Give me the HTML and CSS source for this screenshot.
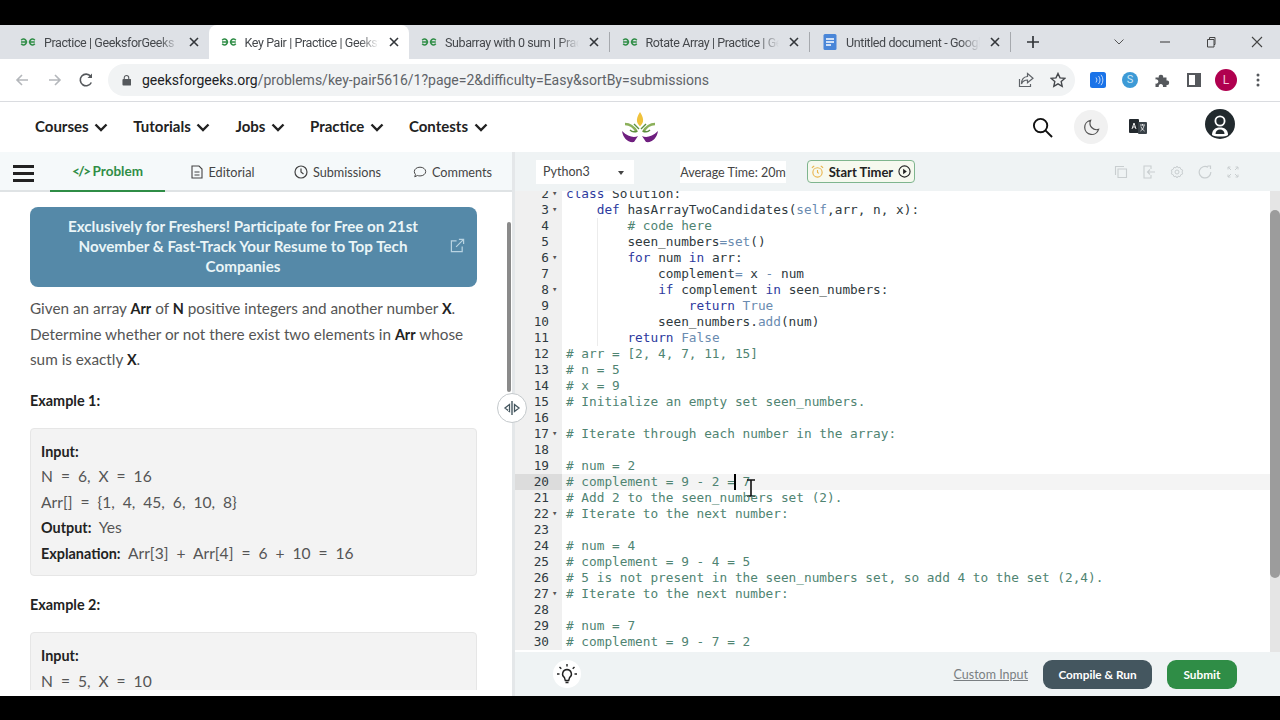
FILE: index.html
```html
<!DOCTYPE html>
<html>
<head>
<title>Key Pair | Practice | GeeksforGeeks</title>
<link rel="stylesheet" href="styles.css">
</head>

<body>

<svg class="defs" width="0" height="0">
<symbol id="gfg" viewBox="0 0 16 10">
<path d="M1 5h6.2M1.2 3.2A2.9 2.9 0 1 1 1.2 6.8M14.8 5H8.8M14.8 3.2A2.9 2.9 0 1 0 14.8 6.8" fill="none" stroke="#2f8d46" stroke-width="1.5"/>
</symbol>
<symbol id="close" viewBox="0 0 10 10">
<path d="M1 1l8 8M9 1l-8 8" stroke="#33363a" stroke-width="1.6"/>
</symbol>
<symbol id="chev" viewBox="0 0 14 9">
<path d="M1.5 1.5L7 7l5.5-5.5" fill="none" stroke="#222" stroke-width="2.4"/>
</symbol>
</svg>

<div class="blackBar topBar"></div>

<div class="tabStrip">
<div class="tab">
<svg class="favicon"><use href="#gfg"/></svg>
<span class="tabTitle">Practice | GeeksforGeeks</span>
<svg class="tabClose"><use href="#close"/></svg>
</div>
<div class="tab active">
<svg class="favicon"><use href="#gfg"/></svg>
<span class="tabTitle">Key Pair | Practice | GeeksforGeeks</span>
<svg class="tabClose"><use href="#close"/></svg>
</div>
<div class="tab sep">
<svg class="favicon"><use href="#gfg"/></svg>
<span class="tabTitle">Subarray with 0 sum | Practice</span>
<svg class="tabClose"><use href="#close"/></svg>
</div>
<div class="tab sep">
<svg class="favicon"><use href="#gfg"/></svg>
<span class="tabTitle">Rotate Array | Practice | GeeksforGeeks</span>
<svg class="tabClose"><use href="#close"/></svg>
</div>
<div class="tab sep">
<svg class="favicon" viewBox="0 0 16 16"><rect x="1.5" width="13" height="16" rx="1.5" fill="#4a86d8"/><path d="M4 5h8M4 8h8M4 11h5" stroke="#fff" stroke-width="1.3"/></svg>
<span class="tabTitle">Untitled document - Google Docs</span>
<svg class="tabClose"><use href="#close"/></svg>
</div>
<svg class="newTab" viewBox="0 0 14 14"><path d="M7 1v12M1 7h12" stroke="#33363a" stroke-width="1.7"/></svg>
<div class="winControls">
<svg class="winIcon" viewBox="0 0 12 12"><path d="M1.5 3.5L6 8l4.5-4.5" fill="none" stroke="#555" stroke-width="1"/></svg>
<svg class="winIcon" viewBox="0 0 12 12"><path d="M1 6h10" stroke="#444" stroke-width="1.1"/></svg>
<svg class="winIcon" viewBox="0 0 12 12"><path d="M2.5 3.5h6.5v7.5h-6.500zM4.500 3.500v-2h5.500v7h-1" fill="none" stroke="#444" stroke-width="1"/></svg>
<svg class="winIcon" viewBox="0 0 12 12"><path d="M1 1l10 10M11 1L1 11" stroke="#444" stroke-width="1.1"/></svg>
</div>
</div>

<div class="toolBar">
<svg class="navIcon back" viewBox="0 0 16 16"><path d="M14 8H3M8 3L3 8l5 5" fill="none" stroke="#b4b7bb" stroke-width="1.6"/></svg>
<svg class="navIcon" viewBox="0 0 16 16"><path d="M2 8h11M8 3l5 5-5 5" fill="none" stroke="#b4b7bb" stroke-width="1.6"/></svg>
<svg class="navIcon reload" viewBox="0 0 16 16"><path d="M13.300 10.500A5.800 5.800 0 1 1 12.600 4.300" fill="none" stroke="#55585c" stroke-width="1.600"/><path d="M14 1.500v4.500H9.500z" fill="#55585c"/></svg>
<div class="omnibox">
<svg class="lock" viewBox="0 0 10 12"><path d="M2.500 5V3.500a2.500 2.500 0 0 1 5 0V5" fill="none" stroke="#55585c" stroke-width="1.200"/><rect y="5" width="10" height="7" rx="1" x="0.500" fill="#55585c"/></svg>
<span class="url">geeksforgeeks.org<span class="urlPath">/problems/key-pair5616/1?page=2&amp;difficulty=Easy&amp;sortBy=submissions</span></span>
<svg class="omniIcon" viewBox="0 0 16 16"><path d="M9.500 1.500L15 6.200l-5.500 4.600V8C6 8 4.500 9.500 3.500 12c0-4.500 2-7.200 6-7.500zM1.500 7v7.500h11V12" fill="none" stroke="#5f6368" stroke-width="1.200"/></svg>
<svg class="omniIcon star" viewBox="0 0 16 16"><path d="M8 1.500l2 4.400 4.800.5-3.600 3.200 1 4.700L8 11.900l-4.200 2.400 1-4.700L1.200 6.400 6 5.900z" fill="none" stroke="#44474b" stroke-width="1.400"/></svg>
</div>
<div class="extensions">
<svg class="extIcon" viewBox="0 0 16 16"><rect width="16" height="16" rx="2.500" fill="#1a73e8"/><path d="M6 5.500a4 4 0 0 1 0 5M8.500 4a6 6 0 0 1 0 8M11 2.800a8 8 0 0 1 0 10.400" fill="none" stroke="#bcd6fa" stroke-width="1"/></svg>
<div class="extS">S</div>
<svg class="extIcon" viewBox="0 0 16 16"><path d="M1.500 5.500h3.300a2.200 2.200 0 1 1 4.300 0h3.400v3.100a2.200 2.200 0 1 1 0 4.300v2.100h-3.600a2.200 2.200 0 1 0-4.100 0H1.500v-3.400a2.200 2.200 0 1 0 0-4.200z" fill="#55585c"/></svg>
<svg class="extIcon" viewBox="0 0 16 16"><path d="M2 2h12v12H2z" fill="none" stroke="#55585c" stroke-width="2"/><rect x="9" y="2" width="5" height="12" fill="#55585c"/></svg>
<div class="profile">L</div>
<svg class="extIcon" viewBox="0 0 16 16"><circle cx="8" cy="3" r="1.500" fill="#55585c"/><circle cx="8" cy="8" r="1.500" fill="#55585c"/><circle cx="8" cy="13" r="1.500" fill="#55585c"/></svg>
</div>
</div>

<div class="siteNav">
<ul class="navMenu">
<li class="navItem">Courses <svg class="chev"><use href="#chev"/></svg></li>
<li class="navItem">Tutorials <svg class="chev"><use href="#chev"/></svg></li>
<li class="navItem">Jobs <svg class="chev"><use href="#chev"/></svg></li>
<li class="navItem">Practice <svg class="chev"><use href="#chev"/></svg></li>
<li class="navItem">Contests <svg class="chev"><use href="#chev"/></svg></li>
</ul>
<svg class="logo" viewBox="0 0 40 32">
<path d="M20 1c2.500 4 3.500 7 3 9.500-.5 2-1.800 3.500-3 5-1.200-1.500-2.500-3-3-5-.5-2.500.5-5.500 3-9.500z" fill="#f0c23c"/>
<path d="M2 20c1 7 6 12 12 11l4-6c-4 2-10 1-16-5zM38 20c-1 7-6 12-12 11l-4-6c4 2 10 1 16-5z" fill="#6f1f7f"/>
<path d="M5 13c5 0 9 3 12 8M35 13c-5 0-9 3-12 8" fill="none" stroke="#8bb05a" stroke-width="2.400"/>
<path d="M10 19c2 2 5 2 7 1M30 19c-2 2-5 2-7 1M14 13l5 5M26 13l-5 5" fill="none" stroke="#5d8f3f" stroke-width="1.400"/>
</svg>
<div class="siteIcons">
<svg class="searchIcon" viewBox="0 0 22 22"><circle cx="9" cy="9" r="7" fill="none" stroke="#111" stroke-width="2"/><path d="M14 14l7 7" stroke="#111" stroke-width="2"/></svg>
<div class="moonBtn"><svg class="moonIcon" viewBox="0 0 18 18"><path d="M8 1.500A7.500 7.500 0 1 0 16.500 11 7 7 0 0 1 8 1.500z" fill="none" stroke="#555" stroke-width="1.300"/></svg></div>
<svg class="langIcon" viewBox="0 0 18 16"><rect width="10" height="14" rx="1" fill="#23292e"/><rect x="9" y="3" width="9" height="12" rx="1" fill="#3a4248"/><path d="M3 10l2-6 2 6M3.800 8h2.400" fill="none" stroke="#fff" stroke-width=".9"/><path d="M11 6h5M13.500 5v1.500M15 6.500c-.5 3-2 4.500-3.500 5.500M12 7.500c.5 2 2 3.500 3.500 4.500" fill="none" stroke="#fff" stroke-width=".8"/></svg>
<svg class="userIcon" viewBox="0 0 30 30"><circle cx="15" cy="15" r="15" fill="#222a2e"/><circle cx="15" cy="12" r="4.600" fill="none" stroke="#fff" stroke-width="1.800"/><path d="M7 26c0-5 3-7.500 8-7.500s8 2.500 8 7.500c-2 2-13 2-16 0z" fill="#fff"/><path d="M10.500 25c0-3 2-4.500 4.500-4.500s4.500 1.500 4.500 4.500z" fill="#222a2e"/></svg>
</div>
</div>

<div class="workspace">

<div class="leftPane">
<div class="paneTabs">
<div class="hamburger"><i></i><i></i><i></i></div>
<div class="paneTab current"><b class="codeMark">&lt;/&gt;</b> Problem</div>
<div class="paneTab">
<svg class="tabIcon" viewBox="0 0 12 14"><path d="M1 1h7l3 3v9H1zM3.500 7h5M3.500 10h5" fill="none" stroke="#444" stroke-width="1.100"/></svg>
Editorial</div>
<div class="paneTab">
<svg class="tabIcon wide" viewBox="0 0 14 14"><circle cx="7" cy="7" r="6" fill="none" stroke="#444" stroke-width="1.200"/><path d="M7 3.500V7l2.500 2" fill="none" stroke="#444" stroke-width="1.200"/></svg>
Submissions</div>
<div class="paneTab">
<svg class="tabIcon wide" viewBox="0 0 16 14"><path d="M8 1.500c3.800 0 6.500 2.300 6.500 5s-2.700 5-6.500 5c-1 0-2-.2-3-.5L2 12.500l.8-2.800C2 8.800 1.500 7.700 1.500 6.500c0-2.700 2.700-5 6.500-5z" fill="none" stroke="#444" stroke-width="1.100"/></svg>
Comments</div>
</div>

<div class="paneBody">
<div class="problem">
<div class="banner">
<div class="bannerText">Exclusively for Freshers! Participate for Free on 21st November &amp; Fast-Track Your Resume to Top Tech Companies</div>
<svg class="bannerIcon" viewBox="0 0 16 16"><path d="M7 3H1.500v11.500H13V9M6.500 9.500L14.500 1.500M9.500 1.500h5v5" fill="none" stroke="#b9d4e2" stroke-width="1.300"/></svg>
</div>
<p class="statement">Given an array <b>Arr</b> of <b>N</b> positive integers and another number <b>X</b>. Determine whether or not there exist two elements in <b>Arr</b> whose sum is exactly <b>X</b>.</p>
<div class="exampleTitle">Example 1:</div>
<div class="exampleBox">
<div><b>Input:</b></div>
<div>N&nbsp; =&nbsp; 6,&nbsp; X&nbsp; =&nbsp; 16</div>
<div>Arr[]&nbsp; =&nbsp; {1,&nbsp; 4,&nbsp; 45,&nbsp; 6,&nbsp; 10,&nbsp; 8}</div>
<div><b>Output:</b>&nbsp; Yes</div>
<div><b>Explanation:</b>&nbsp; Arr[3]&nbsp; +&nbsp; Arr[4]&nbsp; =&nbsp; 6&nbsp; +&nbsp; 10&nbsp; =&nbsp; 16</div>
</div>
<div class="exampleTitle">Example 2:</div>
<div class="exampleBox">
<div><b>Input:</b></div>
<div>N&nbsp; =&nbsp; 5,&nbsp; X&nbsp; =&nbsp; 10</div>
</div>
</div>
<div class="paneThumb"></div>
</div>
</div>

<div class="rightPane">
<div class="editorBar">
<div class="langSelect">Python3 <span class="caret"></span></div>
<div class="avgTime">Average Time: 20m</div>
<div class="timerBtn">
<svg class="alarm" viewBox="0 0 14 14"><circle cx="7" cy="8" r="5" fill="none" stroke="#e9b44c" stroke-width="1.200"/><path d="M7 5.500V8l1.500 1M1 3l2.500-2M13 3l-2.500-2" fill="none" stroke="#e9b44c" stroke-width="1.200"/></svg>
Start Timer
<svg class="playIcon" viewBox="0 0 14 14"><circle cx="7" cy="7" r="6" fill="none" stroke="#222" stroke-width="1.200"/><path d="M5.500 4l4 3-4 3z" fill="#222"/></svg>
</div>
<div class="editorTools">
<svg class="toolIcon" viewBox="0 0 14 14"><path d="M1.500 10V1.500H10M4 4h8.500v8.500H4z" fill="none" stroke="#c9ced0" stroke-width="1.100"/></svg>
<svg class="toolIcon" viewBox="0 0 14 14"><path d="M9 4V1H2v12h7v-3M13 7H6M8 4.500L5.500 7 8 9.500" fill="none" stroke="#c9ced0" stroke-width="1.100"/></svg>
<svg class="toolIcon" viewBox="0 0 14 14"><circle cx="7" cy="7" r="2" fill="none" stroke="#c9ced0"/><path d="M7 1l1 1.800 2-.5.800 2 1.900.8-.6 1.900.6 1.900-1.900.8-.8 2-2-.5-1 1.800-1-1.800-2 .5-.8-2-1.900-.8.6-1.900-.6-1.900 1.900-.8.800-2 2 .5z" fill="none" stroke="#c9ced0"/></svg>
<svg class="toolIcon" viewBox="0 0 14 14"><path d="M10 2.200A5.800 5.800 0 1 0 12.800 7M9.500 1h3v3" fill="none" stroke="#c9ced0" stroke-width="1.200"/></svg>
<svg class="toolIcon" viewBox="0 0 14 14"><path d="M2 2l3 3M12 2L9 5M2 12l3-3M12 12L9 9M2 4.500V2h2.500M12 4.500V2H9.500M2 9.500V12h2.500M12 9.500V12H9.500" fill="none" stroke="#c9ced0"/></svg>
</div>
</div>

<div class="editorWrap">
<div class="editor">
<div class="codeLines">
<div class="line"><span class="gutter">2<em>▾</em></span><code><span class="kw">class</span> Solution:</code></div>
<div class="line"><span class="gutter">3<em>▾</em></span><code>    <span class="kw">def</span> hasArrayTwoCandidates(<span class="bi">self</span>,arr, n, x):</code></div>
<div class="line guide"><span class="gutter">4</span><code>        <span class="cm"># code here</span></code></div>
<div class="line guide"><span class="gutter">5</span><code>        seen_numbers<span class="bi">=set</span>()</code></div>
<div class="line guide"><span class="gutter">6<em>▾</em></span><code>        <span class="kw">for</span> num <span class="kw">in</span> arr:</code></div>
<div class="line guide"><span class="gutter">7</span><code>            complement<span class="bi">=</span> x <span class="bi">-</span> num</code></div>
<div class="line guide"><span class="gutter">8<em>▾</em></span><code>            <span class="kw">if</span> complement <span class="kw">in</span> seen_numbers:</code></div>
<div class="line guide"><span class="gutter">9</span><code>                <span class="kw">return</span> <span class="bi">True</span></code></div>
<div class="line guide"><span class="gutter">10</span><code>            seen_numbers.<span class="bi">add</span>(num)</code></div>
<div class="line guide"><span class="gutter">11</span><code>        <span class="kw">return</span> <span class="bi">False</span></code></div>
<div class="line"><span class="gutter">12</span><code class="cm"># arr = [2, 4, 7, 11, 15]</code></div>
<div class="line"><span class="gutter">13</span><code class="cm"># n = 5</code></div>
<div class="line"><span class="gutter">14</span><code class="cm"># x = 9</code></div>
<div class="line"><span class="gutter">15</span><code class="cm"># Initialize an empty set seen_numbers.</code></div>
<div class="line"><span class="gutter">16</span><code></code></div>
<div class="line"><span class="gutter">17<em>▾</em></span><code class="cm"># Iterate through each number in the array:</code></div>
<div class="line"><span class="gutter">18</span><code></code></div>
<div class="line"><span class="gutter">19</span><code class="cm"># num = 2</code></div>
<div class="line activeLine"><span class="gutter">20</span><code class="cm"># complement = 9 - 2 =<span class="textCursor"></span> 7<svg class="iBeam" viewBox="0 0 10 18"><path d="M1 1h8M1 17h8M5 1v16" fill="none" stroke="#111" stroke-width="1.600"/></svg></code></div>
<div class="line"><span class="gutter">21</span><code class="cm"># Add 2 to the seen_numbers set (2).</code></div>
<div class="line"><span class="gutter">22<em>▾</em></span><code class="cm"># Iterate to the next number:</code></div>
<div class="line"><span class="gutter">23</span><code></code></div>
<div class="line"><span class="gutter">24</span><code class="cm"># num = 4</code></div>
<div class="line"><span class="gutter">25</span><code class="cm"># complement = 9 - 4 = 5</code></div>
<div class="line"><span class="gutter">26</span><code class="cm"># 5 is not present in the seen_numbers set, so add 4 to the set (2,4).</code></div>
<div class="line"><span class="gutter">27<em>▾</em></span><code class="cm"># Iterate to the next number:</code></div>
<div class="line"><span class="gutter">28</span><code></code></div>
<div class="line"><span class="gutter">29</span><code class="cm"># num = 7</code></div>
<div class="line"><span class="gutter">30</span><code class="cm"># complement = 9 - 7 = 2</code></div>
</div>
</div>
<div class="editorScroll"><div class="editorThumb"></div></div>
</div>

<div class="editorFoot">
<div class="hintBtn"><svg class="bulb" viewBox="0 0 22 22"><path d="M11 6.500a4.500 4.500 0 0 0-2.500 8.200l.800 2.800h3.400l.8-2.800A4.500 4.500 0 0 0 11 6.500zM9.500 19.500h3M11 1v2.500M3.500 4l1.800 1.800M18.500 4l-1.800 1.800M1 11h2.500M18.500 11H21" fill="none" stroke="#222" stroke-width="1.400"/></svg></div>
<div class="customInput">Custom Input</div>
<div class="btn compile">Compile &amp; Run</div>
<div class="btn submit">Submit</div>
</div>
</div>

<div class="splitHandle"><svg viewBox="0 0 18 14"><path d="M6.500 3.500L2 7l4.500 3.500zM11.500 3.500L16 7l-4.500 3.500z" fill="none" stroke="#44565f" stroke-width="1.300"/><path d="M9 0v14" stroke="#44565f" stroke-width="1.400"/></svg></div>
</div>

<div class="blackBar bottomBar"></div>

</body>
</html>
```

FILE: styles.css
```css
html, body {
    margin: 0;
    height: 720px;
    overflow: hidden;
    background: #000;
    font-family: Lato, "Open Sans", sans-serif;
}
.defs {
    position: absolute;
}
.blackBar {
    background: #000;
}
.topBar {
    height: 25px;
}
.bottomBar {
    height: 24px;
}

/* browser tabs */
.tabStrip {
    height: 34px;
    background: #dee1e6;
    display: flex;
    align-items: center;
    padding-left: 8px;
}
.tab {
    width: 200.5px;
    height: 34px;
    box-sizing: border-box;
    display: flex;
    align-items: center;
    padding: 0 10px 0 12px;
    font: 12.5px Roboto, sans-serif;
    letter-spacing: -0.4px;
    color: #45484c;
}
.tab.active {
    background: #fff;
    border-radius: 8px 8px 0 0;
}
.tab.sep {
    border-right: 1px solid #a6a9ae;
    height: 20px;
}
.favicon {
    width: 16px;
    height: 16px;
    flex: none;
    margin-right: 8px;
}
.tabTitle {
    flex: 1;
    overflow: hidden;
    white-space: nowrap;
    -webkit-mask-image: linear-gradient(to right, #000 85%, transparent);
    mask-image: linear-gradient(to right, #000 85%, transparent);
}
.tabClose {
    width: 10px;
    height: 10px;
    flex: none;
    margin-left: 10px;
}
.newTab {
    width: 14px;
    height: 14px;
    margin-left: 15px;
}
.winControls {
    margin-left: auto;
    display: flex;
    align-items: center;
    gap: 34px;
    padding-right: 17px;
}
.winIcon {
    width: 12px;
    height: 12px;
}

/* address bar */
.toolBar {
    height: 42px;
    background: #fff;
    border-bottom: 1px solid #dadce0;
    display: flex;
    align-items: center;
    padding-left: 14px;
}
.navIcon {
    width: 16px;
    height: 16px;
    margin-right: 15px;
}
.navIcon.back {
    margin-right: 17px;
}
.navIcon.reload {
    margin-right: 14px;
}
.omnibox {
    width: 967px;
    height: 32px;
    border-radius: 16px;
    background: #f1f3f4;
    display: flex;
    align-items: center;
    box-sizing: border-box;
    padding-left: 14px;
}
.lock {
    width: 9px;
    height: 12px;
    margin-right: 11px;
}
.url {
    font: 14px Roboto, sans-serif;
    color: #202124;
    flex: 1;
    white-space: nowrap;
}
.urlPath {
    color: #5f6368;
}
.omniIcon {
    width: 16px;
    height: 16px;
    margin-right: 16px;
}
.omniIcon.star {
    margin-right: 9px;
}
.extensions {
    display: flex;
    align-items: center;
    margin-left: 15px;
    gap: 16px;
}
.extIcon {
    width: 16px;
    height: 16px;
}
.extS {
    width: 16px;
    height: 16px;
    border-radius: 50%;
    background: #3d9ad6;
    color: #cfe8f7;
    font: 11px/16px Roboto, sans-serif;
    text-align: center;
}
.profile {
    width: 22px;
    height: 22px;
    margin: 0 -3px;
    border-radius: 50%;
    background: #b0004f;
    color: #f6c9dc;
    font: 12px/22px Roboto, sans-serif;
    text-align: center;
}

/* site navigation */
.siteNav {
    height: 50px;
    background: #fff;
    display: flex;
    align-items: center;
}
.navMenu {
    list-style: none;
    display: flex;
    margin: 0;
    padding: 0 0 2px 35px;
    gap: 25px;
    width: 584px;
    box-sizing: border-box;
}
.navItem {
    font: bold 15px Lato, sans-serif;
    color: #222;
    white-space: nowrap;
}
.chev {
    width: 14px;
    height: 9px;
    margin-left: 2px;
}
.logo {
    width: 40px;
    height: 32px;
    margin-left: 36px;
}
.siteIcons {
    margin-left: auto;
    display: flex;
    align-items: center;
    padding-right: 45px;
}
.searchIcon {
    width: 21px;
    height: 21px;
    margin-top: 1px;
}
.moonBtn {
    width: 34px;
    height: 34px;
    margin-left: 21px;
    border-radius: 50%;
    background: #f1f1f1;
    display: flex;
    align-items: center;
    justify-content: center;
}
.moonIcon {
    width: 17px;
    height: 17px;
}
.langIcon {
    width: 18px;
    height: 16px;
    margin-left: 21px;
}
.userIcon {
    width: 30px;
    height: 30px;
    margin-left: 58px;
    margin-top: -6px;
}

/* split panes */
.workspace {
    height: 544px;
    display: flex;
    position: relative;
    background: #fff;
}
.leftPane {
    width: 512px;
    flex: none;
    display: flex;
    flex-direction: column;
}
.paneTabs {
    height: 38px;
    background: #f5f9fa;
    border-bottom: 2px solid #dfe3e5;
    display: flex;
    font-size: 12.7px;
    color: #444;
}
.hamburger {
    width: 21px;
    margin: 13px 16px 0 13px;
}
.hamburger i {
    display: block;
    height: 3px;
    background: #222;
    margin-bottom: 4px;
}
.paneTab {
    width: 115px;
    height: 40px;
    box-sizing: border-box;
    display: flex;
    align-items: center;
    justify-content: center;
    white-space: nowrap;
}
.paneTab.current {
    border-bottom: 2px solid #2f8d46;
    color: #2f8d46;
    font-weight: bold;
    font-size: 13.5px;
}
.codeMark {
    margin-right: 3px;
    letter-spacing: -1.5px;
}
.tabIcon {
    width: 12px;
    height: 14px;
    margin-right: 6px;
}
.tabIcon.wide {
    width: 14px;
    margin-right: 5px;
}
.paneBody {
    flex: 1;
    display: flex;
    align-items: flex-start;
}
.problem {
    width: 447px;
    height: 483px;
    overflow: hidden;
    padding: 15px 30px 0;
    flex: none;
    color: #555;
    font-size: 15.3px;
}
.paneThumb {
    width: 4px;
    height: 170px;
    margin-top: 30px;
    background: #8a8a8a;
    border-radius: 2px;
}
.banner {
    height: 80px;
    box-sizing: border-box;
    padding: 0 12px 3px 28px;
    border-radius: 8px;
    background: #5589a8;
    display: flex;
    align-items: center;
}
.bannerText {
    flex: 1;
    color: #eaf5f7;
    font-weight: bold;
    font-size: 15.2px;
    line-height: 20px;
    text-align: center;
}
.bannerIcon {
    width: 15px;
    height: 15px;
    margin-left: 22px;
}
.statement {
    margin: 9px 0 0;
    line-height: 25.5px;
}
.statement b, .exampleBox b, .exampleTitle {
    color: #222;
    font-weight: bold;
    font-size: 14.4px;
}
.exampleTitle {
    margin: 16px 0 15px;
    line-height: 25px;
}
.statement + .exampleTitle {
    margin-top: 15px;
}
.exampleBox {
    background: #f3f3f3;
    border: 1px solid #e6e6e6;
    border-radius: 4px;
    padding: 10px 10px 9px;
    line-height: 25.5px;
    font-size: 15.6px;
}

.rightPane {
    flex: 1;
    min-width: 0;
    border-left: 3px solid #e4e7e9;
    display: flex;
    flex-direction: column;
}
.editorBar {
    height: 39px;
    flex: none;
    background: #eff3f4;
    display: flex;
    align-items: center;
    padding-left: 21px;
    font-size: 12.5px;
    color: #444;
}
.langSelect {
    width: 98px;
    height: 24px;
    box-sizing: border-box;
    background: #fff;
    padding-left: 7px;
    line-height: 24px;
    position: relative;
}
.caret {
    position: absolute;
    right: 10px;
    top: 11px;
    border: 3px solid transparent;
    border-top: 4px solid #444;
}
.avgTime {
    width: 106px;
    height: 22px;
    margin-left: 46px;
    background: #fff;
    line-height: 24px;
    white-space: nowrap;
    text-align: center;
}
.timerBtn {
    width: 108px;
    height: 23px;
    margin-left: 21px;
    box-sizing: border-box;
    border: 1px solid #7fb58e;
    border-radius: 4px;
    background: #f6f9ef;
    display: flex;
    align-items: center;
    justify-content: center;
    gap: 5px;
    color: #222;
    font-weight: bold;
    font-size: 13px;
    white-space: nowrap;
}
.alarm, .playIcon {
    width: 13px;
    height: 13px;
    flex: none;
}
.editorTools {
    margin-left: auto;
    display: flex;
    gap: 14px;
    padding-right: 40px;
}
.toolIcon {
    width: 14px;
    height: 14px;
}
.editorWrap {
    height: 461px;
    flex: none;
    display: flex;
}
.editor {
    flex: 1;
    overflow: hidden;
}
.codeLines {
    margin-top: -5px;
}
.line {
    height: 16px;
    display: flex;
    font: 12.75px/16px "DejaVu Sans Mono", monospace;
    color: #2f3a40;
}
.gutter {
    width: 47px;
    flex: none;
    box-sizing: border-box;
    background: #f0f0f0;
    text-align: right;
    padding-right: 13px;
    position: relative;
}
.gutter em {
    position: absolute;
    left: 37px;
    top: -1px;
    font-style: normal;
    font-size: 9px;
    color: #555;
}
.line code {
    flex: 1;
    padding-left: 4px;
    white-space: pre;
    font: inherit;
    position: relative;
}
.line.guide code {
    background: linear-gradient(#ececec, #ececec) 35px 0 / 1px 100% no-repeat;
}
.activeLine code {
    background: #f4f4f4;
}
.activeLine .gutter {
    background: #dcdcdc;
}
.kw {
    color: #2d3a9e;
}
.bi {
    color: #6a8bb0;
}
.cm {
    color: #4f8472;
}
.textCursor {
    display: inline-block;
    width: 2px;
    height: 16px;
    margin: 0 -1px;
    background: #000;
    vertical-align: top;
}
.iBeam {
    position: absolute;
    left: 184px;
    top: 5px;
    width: 10px;
    height: 18px;
}
.editorScroll {
    width: 10px;
    flex: none;
    background: #e5e5e5;
}
.editorThumb {
    height: 368px;
    margin-top: 19px;
    background: #9c9c9c;
    border-radius: 5px;
}
.editorFoot {
    height: 44px;
    flex: none;
    background: #eff3f4;
    display: flex;
    align-items: center;
    padding-left: 38px;
}
.hintBtn {
    width: 28px;
    height: 28px;
    border-radius: 50%;
    background: #fff;
    display: flex;
    align-items: center;
    justify-content: center;
}
.bulb {
    width: 22px;
    height: 22px;
}
.customInput {
    margin-left: auto;
    color: #7a7f82;
    font-size: 12.5px;
    text-decoration: underline;
}
.btn {
    height: 29px;
    border-radius: 9px;
    color: #fff;
    font-weight: bold;
    font-size: 11.8px;
    line-height: 29px;
    text-align: center;
}
.compile {
    width: 109px;
    margin-left: 15px;
    background: #44565f;
}
.submit {
    width: 70px;
    margin: 0 43px 0 15px;
    background: #2f8d46;
}
.splitHandle {
    position: absolute;
    left: 497px;
    top: 241px;
    width: 30px;
    height: 30px;
    box-sizing: border-box;
    border: 1px solid #c4c9cc;
    border-radius: 50%;
    background: #fff;
    display: flex;
    align-items: center;
    justify-content: center;
}
.splitHandle svg {
    width: 18px;
    height: 14px;
}
```
